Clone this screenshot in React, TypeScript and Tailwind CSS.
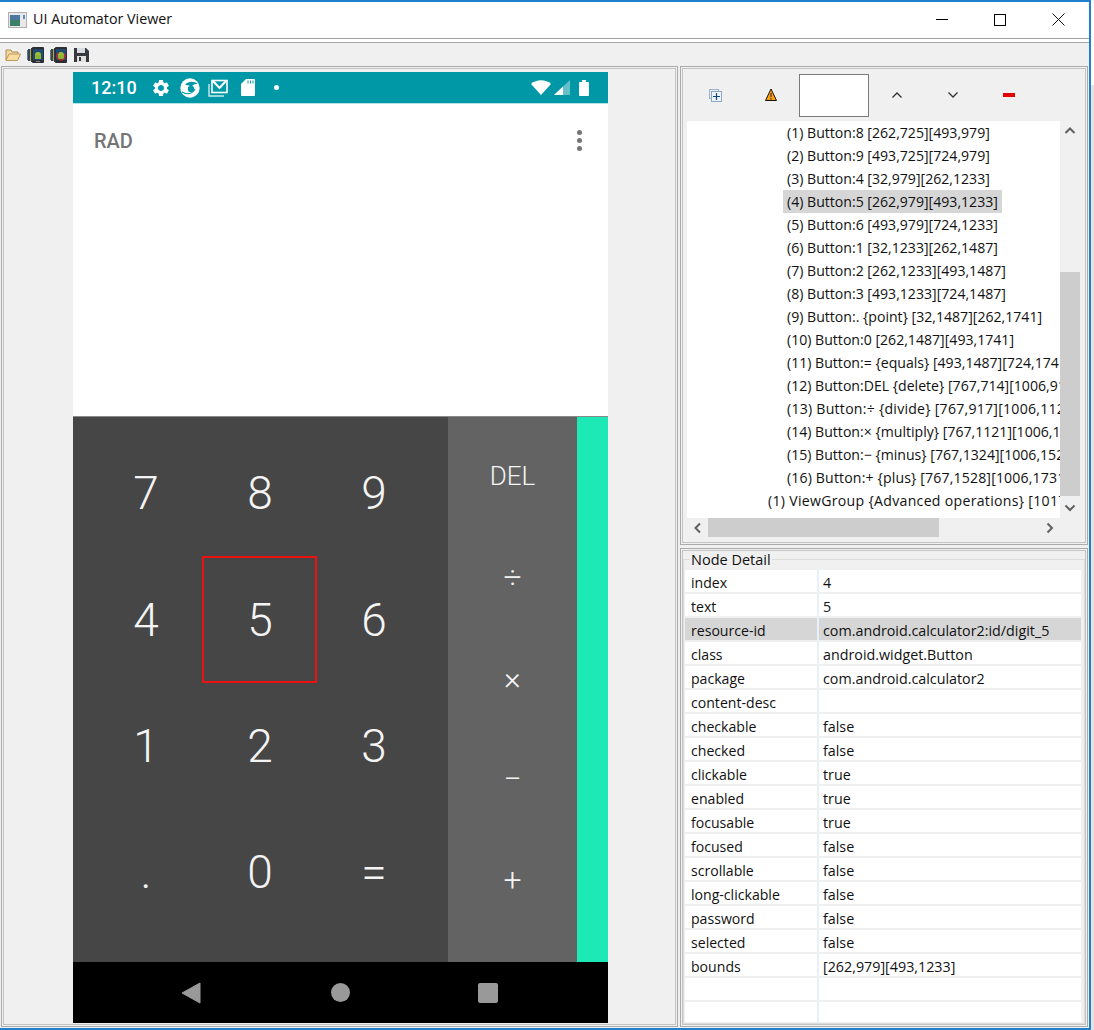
import React from "react";

const treeRows: [string, boolean?, string?][] = [
  ["(1) Button:8 [262,725][493,979]"],
  ["(2) Button:9 [493,725][724,979]"],
  ["(3) Button:4 [32,979][262,1233]"],
  ["(4) Button:5 [262,979][493,1233]", true],
  ["(5) Button:6 [493,979][724,1233]"],
  ["(6) Button:1 [32,1233][262,1487]"],
  ["(7) Button:2 [262,1233][493,1487]"],
  ["(8) Button:3 [493,1233][724,1487]"],
  ["(9) Button:. {point} [32,1487][262,1741]"],
  ["(10) Button:0 [262,1487][493,1741]"],
  ["(11) Button:= {equals} [493,1487][724,1741]"],
  ["(12) Button:DEL {delete} [767,714][1006,917]"],
  ["(13) Button:÷ {divide} [767,917][1006,1121]", false, "tracking-[0.25px]"],
  ["(14) Button:× {multiply} [767,1121][1006,1324]"],
  ["(15) Button:− {minus} [767,1324][1006,1528]"],
  ["(16) Button:+ {plus} [767,1528][1006,1731]", false, "tracking-[0.15px]"],
];

const details: [string, string][] = [
  ["index", "4"],
  ["text", "5"],
  ["resource-id", "com.android.calculator2:id/digit_5"],
  ["class", "android.widget.Button"],
  ["package", "com.android.calculator2"],
  ["content-desc", ""],
  ["checkable", "false"],
  ["checked", "false"],
  ["clickable", "true"],
  ["enabled", "true"],
  ["focusable", "true"],
  ["focused", "false"],
  ["scrollable", "false"],
  ["long-clickable", "false"],
  ["password", "false"],
  ["selected", "false"],
  ["bounds", "[262,979][493,1233]"],
  ["", ""],
];

const digits = ["7", "8", "9", "4", "5", "6", "1", "2", "3", ".", "0", "="];
const ops = ["DEL", "÷", "×", "−", "+"];

function DeviceIcon({ screenshot }: { screenshot?: boolean }) {
  return (
    <svg width="17" height="16" viewBox="0 0 17 16">
      <rect x="0" y="3" width="1" height="10" fill="#6a747c" />
      <rect x="1" y="2" width="2" height="12" fill="#33485a" />
      <rect x="3" y="2" width="1" height="12" fill="#b8a83c" />
      <rect x="4" y="1" width="1" height="14" fill="#28384a" />
      <rect x="5" y="0" width="12" height="16" rx="1" fill="#2c2e32" />
      <rect x="6" y="2" width="10" height="11" fill="#1f4a72" />
      <path d="M8 8a3 3 0 0 1 6 0z" fill="#9cc03a" />
      <rect x="8" y="8" width="6" height="4" fill="#8fb52f" />
      {screenshot ? <circle cx="11" cy="9" r="4" fill="none" stroke="#d8262c" strokeWidth="1.2" strokeDasharray="16 6" /> : <rect x="9" y="14" width="4" height="1" fill="#888" />}
    </svg>
  );
}

function Chevron({ dir, className }: { dir: "up" | "down" | "left" | "right"; className?: string }) {
  const d = {
    up: "M1.5 8 L6 3.5 L10.5 8",
    down: "M1.5 3.5 L6 8 L10.5 3.5",
    left: "M8 1.5 L3.5 6 L8 10.5",
    right: "M3.5 1.5 L8 6 L3.5 10.5",
  }[dir];
  return (
    <svg width="12" height="12" viewBox="0 0 12 12" className={className}>
      <path d={d} fill="none" stroke="#606060" strokeWidth="2" />
    </svg>
  );
}

function StatusBar() {
  return (
    <div className="h-[32px] bg-[#0097a7] border-b border-[#b4e2e8] flex items-center pl-[18px] text-white shrink-0">
      <span className="text-[18px] font-medium w-[61px] leading-none [font-family:Roboto,sans-serif]">12:10</span>
      <svg width="20" height="20" viewBox="0 0 24 24" className="ml-[-1px]">
        <path fill="#fff" d="M19.14 12.94c.04-.3.06-.61.06-.94 0-.32-.02-.64-.07-.94l2.03-1.58c.18-.14.23-.41.12-.61l-1.92-3.32c-.12-.22-.37-.29-.59-.22l-2.39.96c-.5-.38-1.03-.7-1.62-.94l-.36-2.54c-.04-.24-.24-.41-.48-.41h-3.84c-.24 0-.43.17-.47.41l-.36 2.54c-.59.24-1.13.57-1.62.94l-2.39-.96c-.22-.08-.47 0-.59.22L2.74 8.87c-.12.21-.08.47.12.61l2.03 1.58c-.05.3-.09.63-.09.94s.02.64.07.94l-2.03 1.58c-.18.14-.23.41-.12.61l1.92 3.32c.12.22.37.29.59.22l2.39-.96c.5.38 1.03.7 1.62.94l.36 2.54c.05.24.24.41.48.41h3.84c.24 0 .44-.17.47-.41l.36-2.54c.59-.24 1.13-.56 1.62-.94l2.39.96c.22.08.47 0 .59-.22l1.92-3.32c.12-.22.07-.47-.12-.61l-2.01-1.58zM12 15.6c-1.98 0-3.6-1.62-3.6-3.6s1.62-3.6 3.6-3.6 3.6 1.62 3.6 3.6-1.62 3.6-3.6 3.6z" />
      </svg>
      <svg width="20" height="20" viewBox="0 0 20 20" className="ml-[9px]">
        <circle cx="10" cy="10" r="9.7" fill="#fff" />
        <path d="M5 7 C8 3 14 3 18 6 C14 5.5 12 7 12 9 C10 7.5 7 7 5 7Z" fill="#0097a7" />
        <circle cx="11" cy="11" r="3.2" fill="#0097a7" />
        <path d="M2 14 C7 17 12 16 15 11" fill="none" stroke="#0097a7" strokeWidth="1.2" />
      </svg>
      <svg width="20" height="18" viewBox="0 0 20 18" className="ml-[8px]">
        <path d="M1 5v12h15" fill="none" stroke="#cdeaee" strokeWidth="1.4" />
        <rect x="4" y="1.5" width="15" height="12" fill="none" stroke="#fff" strokeWidth="1.6" />
        <path d="M5 2l6.5 7L18 2" fill="none" stroke="#fff" strokeWidth="2" />
      </svg>
      <svg width="14" height="17" viewBox="0 0 14 17" className="ml-[13px]">
        <path d="M5 0h8a1 1 0 0 1 1 1v15a1 1 0 0 1-1 1H1a1 1 0 0 1-1-1V5z" fill="#fff" />
        <path d="M7 1.5v3M9.5 1.5v3M12 1.5v3" stroke="#0097a7" strokeWidth="1" />
      </svg>
      <span className="w-[5px] h-[5px] rounded-full bg-white ml-[19px]" />
      <div className="ml-auto flex items-center mr-[19px]">
        <svg width="20" height="15" viewBox="0 0 20 15">
          <path d="M0 4 C5 -1 15 -1 20 4 L10 15Z" fill="#fff" />
        </svg>
        <svg width="16" height="15" viewBox="0 0 16 15" className="ml-[3px]">
          <path d="M0 15 L16 0 V15Z" fill="#66c0ca" />
          <path d="M0 15 L9 6.5 V15Z" fill="#fff" />
        </svg>
        <svg width="10" height="16" viewBox="0 0 10 16" className="ml-[9px]">
          <path d="M3 0h4v2H9a1 1 0 0 1 1 1v12a1 1 0 0 1-1 1H1a1 1 0 0 1-1-1V3a1 1 0 0 1 1-1h2z" fill="#fff" />
        </svg>
      </div>
    </div>
  );
}

function Phone() {
  return (
    <div className="w-[535px] h-[951px] flex flex-col [font-family:Roboto,sans-serif]">
      <StatusBar />
      <div className="h-[312px] bg-white flex justify-between items-start pl-[21px] pr-[26px] pt-[25px] shrink-0">
        <span className="text-[20px] font-medium text-[#757575] leading-[24px]">RAD</span>
        <div className="flex flex-col gap-[3px] pt-[1px]">
          <span className="w-[5px] h-[5px] rounded-full bg-[#757575]" />
          <span className="w-[5px] h-[5px] rounded-full bg-[#757575]" />
          <span className="w-[5px] h-[5px] rounded-full bg-[#757575]" />
        </div>
      </div>
      <div className="h-[546px] flex shrink-0 border-t border-[#8a8a8a]">
        <div className="w-[375px] bg-[#464646] pl-[16px] pt-[13px]">
          <div className="grid grid-cols-[114px_114px_114px] grid-rows-[126.4px_126.4px_126.4px_126.4px]">
            {digits.map((d) => (
              <div key={d} className="relative flex items-center justify-center text-[46px] font-light text-[#f4f4f4] leading-none">
                {d}
                {d === "5" && <div className="absolute inset-0 ml-[-1px] border-2 border-[#ee1111]" />}
              </div>
            ))}
          </div>
        </div>
        <div className="w-[129px] bg-[#636363] pt-[8px] flex flex-col">
          {ops.map((o) => (
            <div key={o} className={`h-[101px] flex items-center justify-center font-light text-[#f4f4f4] leading-none ${o === "DEL" ? "text-[26px]" : "text-[32px]"}`}>
              {o}
            </div>
          ))}
        </div>
        <div className="w-[31px] bg-[#1de9b6]" />
      </div>
      <div className="h-[61px] bg-black flex items-center pl-[108px] shrink-0">
        <svg width="20" height="22" viewBox="0 0 20 22">
          <path d="M19 1 V21 L1 11Z" fill="#999" stroke="#999" strokeWidth="1" strokeLinejoin="round" />
        </svg>
        <span className="w-[19px] h-[19px] rounded-full bg-[#999] ml-[130px]" />
        <span className="w-[20px] h-[20px] rounded-[2px] bg-[#999] ml-[128px]" />
      </div>
    </div>
  );
}

function ToolbarButtons() {
  return (
    <div className="h-[52px] flex items-center shrink-0 pl-[26px]">
      <svg width="13" height="13" viewBox="0 0 13 13">
        <rect x="0.5" y="0.5" width="9" height="9" fill="#e4ecf4" stroke="#9fb4cc" />
        <rect x="2.5" y="2.5" width="10" height="10" fill="#eef5fa" stroke="#8ea6c0" />
        <path d="M7.5 4v7M4 7.5h7" stroke="#0d4a78" strokeWidth="1.2" />
      </svg>
      <svg width="12" height="13" viewBox="0 0 12 13" className="ml-[43px] mt-[-2px]">
        <path d="M6 1 L11.5 12.5 H0.5Z" fill="#ff9f10" stroke="#111" strokeWidth="1" />
        <path d="M6 5v4M6 10v1.5" stroke="#222" strokeWidth="1" />
      </svg>
      <div className="w-[70px] h-[43px] bg-white border border-[#7a7a7a] ml-[22px]" />
      <svg width="10" height="6" viewBox="0 0 10 6" className="ml-[23px]">
        <path d="M0.5 5.5 L5 1 L9.5 5.5" fill="none" stroke="#333" strokeWidth="1.3" />
      </svg>
      <svg width="10" height="6" viewBox="0 0 10 6" className="ml-[46px]">
        <path d="M0.5 0.5 L5 5 L9.5 0.5" fill="none" stroke="#333" strokeWidth="1.3" />
      </svg>
      <div className="w-[12px] h-[4px] bg-[#e60000] ml-[45px]" />
    </div>
  );
}

function TreeView() {
  return (
    <div className="flex-1 min-h-0 flex flex-col">
      <div className="flex h-[397px] ml-[4px]">
        <div className="w-[373px] bg-white overflow-hidden whitespace-nowrap text-[14.1px]">
          {treeRows.map(([t, sel, extra]) => (
            <div key={t} className={`h-[23px] flex items-center pl-[96px] ${extra ?? ""}`}>
              <span className={`px-[4px] h-[23px] leading-[23px] ${sel ? "bg-[#d6d6d6]" : ""}`}>{t}</span>
            </div>
          ))}
          <div className="h-[23px] leading-[23px] pl-[81px] tracking-[0.3px]">(1) ViewGroup {"{Advanced operations}"} [1017,714][1080,1731]</div>
        </div>
        <div className="w-[20px] flex flex-col items-center">
          <div className="h-[20px] flex items-center justify-center"><Chevron dir="up" /></div>
          <div className="flex-1 w-full flex flex-col pt-[131px] pb-[2px]">
            <div className="flex-1 bg-[#cdcdcd]" />
          </div>
          <div className="h-[20px] flex items-center justify-center"><Chevron dir="down" /></div>
        </div>
      </div>
      <div className="flex h-[19px] ml-[4px] w-[373px] items-center">
        <div className="w-[21px] flex justify-center"><Chevron dir="left" /></div>
        <div className="w-[231px] h-full bg-[#cdcdcd]" />
        <div className="flex-1" />
        <div className="w-[21px] flex justify-center"><Chevron dir="right" /></div>
      </div>
    </div>
  );
}

function DetailTable() {
  return (
    <fieldset className="flex-1 min-h-0 border border-[#dcdcdc] pl-[1px] pr-[3px] pb-[1px]">
      <legend className="ml-[5px] px-[1px] leading-[17px] h-[17px] text-[14.5px]">Node Detail</legend>
      <div className="bg-white h-[452px] mt-[2px] overflow-hidden">
        {details.map(([k, v], i) => {
          const sel = k === "resource-id";
          return (
            <div key={i} className={`h-[24px] flex border-b-2 border-[#f0f0f0] ${sel ? "bg-[#d6d6d6]" : ""}`}>
              <div className="w-[134px] pl-[6px] pt-[1px] leading-[24px] border-r-2 border-[#eaf0f8] shrink-0 text-[14.1px]">{k}</div>
              <div className="pl-[4px] pt-[1px] leading-[24px] text-[14.3px]">{v}</div>
            </div>
          );
        })}
        <div className="h-[20px] flex">
          <div className="w-[134px] border-r-2 border-[#eaf0f8]" />
        </div>
      </div>
    </fieldset>
  );
}

function Panel({ className, children }: { className: string; children: React.ReactNode }) {
  return (
    <div className={`border border-[#ababab] p-px bg-[#f0f0f0] ${className}`}>
      <div className="w-full h-full border border-[#c4c4c4] flex flex-col overflow-hidden">{children}</div>
    </div>
  );
}

export default function App() {
  return (
    <div className="w-[1094px] h-[1030px] flex bg-white overflow-hidden text-[14.3px] text-[#111] [font-family:'Open_Sans',sans-serif]">
      <div className="w-[1091px] h-[1030px] border-t-2 border-r-2 border-b-2 border-[#1f80d0] bg-[#f0f0f0] flex flex-col shrink-0">
        <div className="h-[37px] bg-white border-b border-[#a0a0a0] flex items-center pl-[8px] pb-[1px] shrink-0">
          <svg width="19" height="16" viewBox="0 0 19 16">
            <rect x="0.5" y="0.5" width="18" height="15" fill="#e8e8e8" stroke="#b0b0b0" />
            <rect x="2" y="3" width="10" height="11" fill="#3c8068" />
            <rect x="2" y="3" width="10" height="5" fill="#4c78a0" />
            <rect x="15" y="3" width="2" height="4" fill="#5a90c0" />
          </svg>
          <span className="ml-[6px] leading-none">UI Automator Viewer</span>
          <div className="ml-auto flex items-center">
            <div className="w-[12px] h-px bg-black mr-[46px]" />
            <div className="w-[12px] h-[12px] border border-black mr-[46px]" />
            <svg width="13" height="13" viewBox="0 0 13 13" className="mr-[24px]">
              <path d="M0.5 0.5L12.5 12.5M12.5 0.5L0.5 12.5" stroke="#111" strokeWidth="1" />
            </svg>
          </div>
        </div>
        <div className="h-[4px] bg-white border-b border-[#a8a8a8] shrink-0" />
        <div className="h-[23px] flex items-center pl-[5px] shrink-0">
          <svg width="16" height="14" viewBox="0 0 16 14">
            <path d="M1 12V2h5l1 2h6v2" fill="#f0d9a8" stroke="#b08a48" />
            <path d="M1 12.5 L4 6 H15.5 L12.5 12.5Z" fill="#f8dda0" stroke="#c09a58" />
          </svg>
          <div className="ml-[6px] flex"><DeviceIcon /></div>
          <div className="ml-[6px] flex"><DeviceIcon screenshot /></div>
          <svg width="15" height="15" viewBox="0 0 15 15" className="ml-[7px]">
            <path d="M0 1h12l3 3v11H0z" fill="#37393c" />
            <rect x="3" y="1" width="8" height="5" fill="#d9dce0" />
            <rect x="3" y="9" width="9" height="6" fill="#e0e0e0" />
            <rect x="5" y="10" width="2" height="4" fill="#37393c" />
          </svg>
        </div>
        <div className="flex-1 min-h-0 flex pl-px pb-[1px] gap-[2px]">
          <Panel className="w-[677px] h-full shrink-0">
            <div className="pt-[3px] pl-[69px]"><Phone /></div>
          </Panel>
          <div className="w-[408px] flex flex-col gap-[3px] h-full">
            <Panel className="h-[479px] shrink-0">
              <ToolbarButtons />
              <TreeView />
            </Panel>
            <Panel className="flex-1 min-h-0">
              <DetailTable />
            </Panel>
          </div>
        </div>
      </div>
      <div className="w-[3px] h-full flex flex-col">
        <div className="h-[85px] bg-white" />
        <div className="flex-1 bg-[#e4e4e4]" />
      </div>
    </div>
  );
}
